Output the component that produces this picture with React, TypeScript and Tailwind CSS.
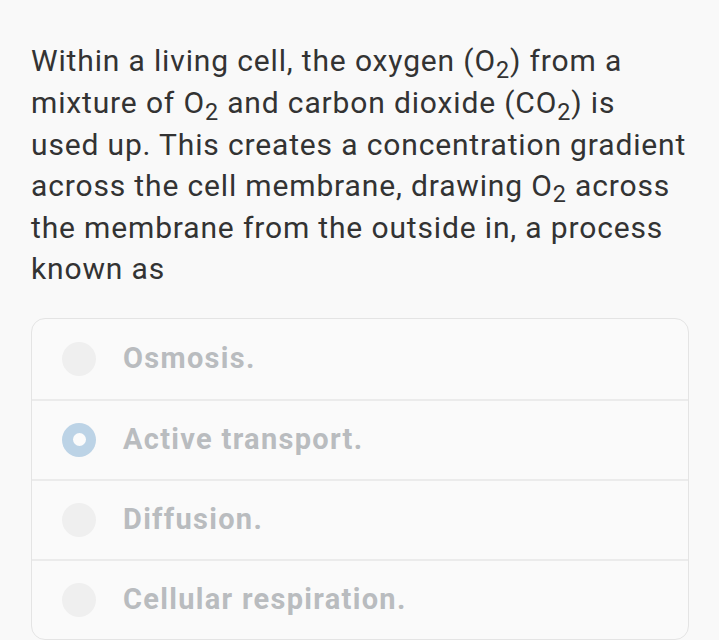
const options = [
  { id: 'a', label: 'Osmosis.', selected: false },
  { id: 'b', label: 'Active transport.', selected: true },
  { id: 'c', label: 'Diffusion.', selected: false },
  { id: 'd', label: 'Cellular respiration.', selected: false },
]

function Sub({ children }: { children: React.ReactNode }) {
  return <span className="inline-block align-[-0.28em] text-[0.78em] leading-none">{children}</span>
}

export default function App() {
  return (
    <div
      className="min-h-[640px] bg-[#f9f9f9] pl-[31px] pr-[30px] pt-[40px]"
      style={{ fontFamily: 'Roboto, "Noto Sans", sans-serif' }}
    >
      <p className="text-[30px] leading-[41px] tracking-[0.85px] text-[#333333] whitespace-nowrap">
        Within a living cell, the oxygen (O<Sub>2</Sub>) from a
        <br />
        mixture of O<Sub>2</Sub> and carbon dioxide (CO<Sub>2</Sub>) is
        <br />
        used up. This creates a concentration gradient
        <br />
        across the cell membrane, drawing O<Sub>2</Sub> across
        <br />
        the membrane from the outside in, a process
        <br />
        known as
      </p>

      <div className="mt-[29px] rounded-[14px] border-[1.5px] border-[#e4e4e4] bg-[#fafafa] overflow-hidden">
        {options.map((option, i) => (
          <div
            key={option.id}
            className={
              'flex h-[80px] items-center ' + (i > 0 ? 'border-t-2 border-[#ebebeb]' : '')
            }
          >
            <div className="ml-[30px] mr-[27px] flex h-[34px] w-[34px] items-center justify-center rounded-full">
              {option.selected ? (
                <div className="flex h-[34px] w-[34px] items-center justify-center rounded-full bg-[#bcd3e6]">
                  <div className="h-[13px] w-[13px] rounded-full bg-[#fbfbfb]" />
                </div>
              ) : (
                <div className="h-[34px] w-[34px] rounded-full bg-[#efefef]" />
              )}
            </div>
            <span className="text-[29px] font-bold tracking-[1.3px] text-[#b9bcbf]">{option.label}</span>
          </div>
        ))}
      </div>
    </div>
  )
}
